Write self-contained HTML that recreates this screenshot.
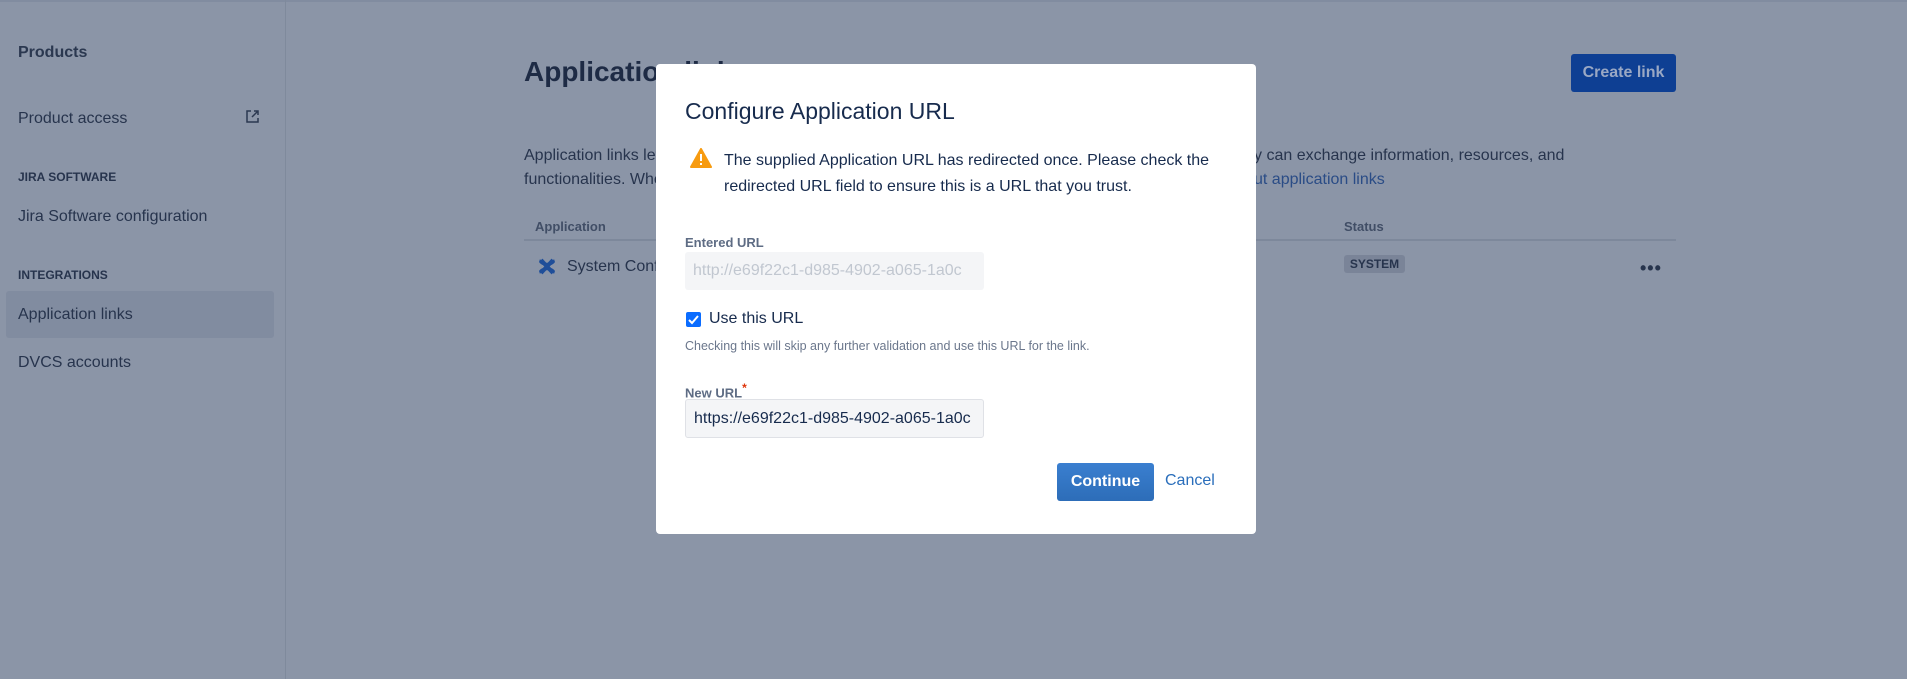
<!DOCTYPE html>
<html><head><meta charset="utf-8"><style>
*{box-sizing:border-box;margin:0;padding:0}
body{width:1907px;height:679px;overflow:hidden;background:#8b95a7;font-family:"Liberation Sans",sans-serif;color:#27344d;position:relative}
.abs{position:absolute;white-space:nowrap}
.side{position:absolute;left:0;top:0;width:286px;height:679px;border-right:1px solid #7f8a9c}
.modal{position:absolute;left:656px;top:64px;width:600px;height:470px;background:#fff;border-radius:4px}
.m{position:absolute;white-space:nowrap;color:#172b4d}
</style></head><body>
<div style="position:absolute;left:0;top:0;width:1907px;height:2px;background:#818ca0"></div>
<div class="side">
<div class="abs" style="left:18px;top:44px;font-size:16px;font-weight:bold;color:#2b3850">Products</div>
<div class="abs" style="left:18px;top:110px;font-size:16px">Product access</div>
<svg class="abs" style="left:245px;top:109px" width="15" height="15" viewBox="0 0 15 15"><path d="M6 2H2v11h11V9M9 2h4v4M13 2L7 8" fill="none" stroke="#2b3850" stroke-width="1.5"/></svg>
<div class="abs" style="left:18px;top:170px;font-size:12px;font-weight:bold">JIRA SOFTWARE</div>
<div class="abs" style="left:18px;top:208px;font-size:16px">Jira Software configuration</div>
<div class="abs" style="left:18px;top:268px;font-size:12px;font-weight:bold">INTEGRATIONS</div>
<div class="abs" style="left:6px;top:291px;width:268px;height:47px;background:#818ca0;border-radius:3px"></div>
<div class="abs" style="left:18px;top:306px;font-size:16px">Application links</div>
<div class="abs" style="left:18px;top:354px;font-size:16px">DVCS accounts</div>
</div>
<div class="abs" style="left:524px;top:56px;font-size:28px;font-weight:bold;color:#1e2b45">Application links</div>
<div class="abs" style="left:1571px;top:54px;width:105px;height:38px;background:#0e3f93;border-radius:3px;color:#9aa8c4;font-size:16px;font-weight:bold;text-align:center;line-height:38px">Create link</div>
<div class="abs" style="left:524px;top:144px;font-size:16px;line-height:24px">Application links let<br>functionalities. When</div>
<div class="abs" style="left:1254px;top:144px;font-size:16px;line-height:24px">y can exchange information, resources, and<br><span style="color:#2a4c86">ut application links</span></div>
<div class="abs" style="left:535px;top:219px;font-size:13px;font-weight:bold;color:#414e66">Application</div>
<div class="abs" style="left:1344px;top:219px;font-size:13px;font-weight:bold;color:#414e66">Status</div>
<div class="abs" style="left:524px;top:239px;width:1152px;height:2px;background:#7d889b"></div>
<svg class="abs" style="left:538px;top:257px" width="18" height="19" viewBox="0 0 18 19"><path d="M2 2c3 5 11 5 14 0l1 3c-3 5-13 5-16 0zM2 17c3-5 11-5 14 0l1-3c-3-5-13-5-16 0z" fill="#1f4e99"/><path d="M3 3l12 13M15 3L3 16" stroke="#1f4e99" stroke-width="4"/></svg>
<div class="abs" style="left:567px;top:258px;font-size:16px">System Confluence</div>
<div class="abs" style="left:1344px;top:255px;width:61px;height:18px;background:#7a8498;border-radius:3px;font-size:12px;font-weight:bold;text-align:center;line-height:18px;color:#27344d">SYSTEM</div>
<div class="abs" style="left:1640px;top:258px;font-size:18px;font-weight:bold;letter-spacing:1px">•••</div>

<div class="modal">
<div class="m" style="left:29px;top:34px;font-size:23px">Configure Application URL</div>
<svg class="m" style="left:34px;top:84px" width="22" height="20" viewBox="0 0 22 20"><path d="M11 1L21 19H1z" fill="#f79b10" stroke="#f79b10" stroke-linejoin="round" stroke-width="2"/><rect x="10" y="6" width="2" height="7" fill="#fff"/><rect x="10" y="15" width="2" height="2" fill="#fff"/></svg>
<div class="m" style="left:68px;top:84px;font-size:16px;line-height:26px">The supplied Application URL has redirected once. Please check the<br>redirected URL field to ensure this is a URL that you trust.</div>
<div class="m" style="left:29px;top:171px;font-size:13px;font-weight:bold;color:#5e6c84">Entered URL</div>
<div class="m" style="left:29px;top:188px;width:299px;height:38px;background:#f4f5f7;border-radius:3px;font-size:16px;color:#c1c7d0;line-height:38px;padding-left:8px;overflow:hidden">http://e69f22c1-d985-4902-a065-1a0c</div>
<div class="m" style="left:30px;top:248px;width:15px;height:15px;background:#0a6cff;border-radius:2px"><svg width="15" height="15" viewBox="0 0 15 15"><path d="M3 8l3 3 6-7" fill="none" stroke="#fff" stroke-width="2"/></svg></div>
<div class="m" style="left:53px;top:246px;font-size:16px">Use this URL</div>
<div class="m" style="left:29px;top:275px;font-size:12.5px;color:#6b778c">Checking this will skip any further validation and use this URL for the link.</div>
<div class="m" style="left:29px;top:317px;font-size:13px;font-weight:bold;color:#5e6c84">New URL<sup style="color:#de350b;font-size:12px">*</sup></div>
<div class="m" style="left:29px;top:335px;width:299px;height:39px;background:#f4f5f7;border:1px solid #dfe1e6;border-radius:3px;font-size:16px;color:#172b4d;line-height:37px;padding-left:8px;overflow:hidden">https://e69f22c1-d985-4902-a065-1a0c</div>
<div class="m" style="left:401px;top:399px;width:97px;height:38px;background:linear-gradient(#3a7fd0,#2d6db8);border-radius:3px;color:#fff;font-size:16px;font-weight:bold;text-align:center;line-height:38px">Continue</div>
<div class="m" style="left:509px;top:408px;font-size:16px;color:#2a6ebb">Cancel</div>
</div>
</body></html>
